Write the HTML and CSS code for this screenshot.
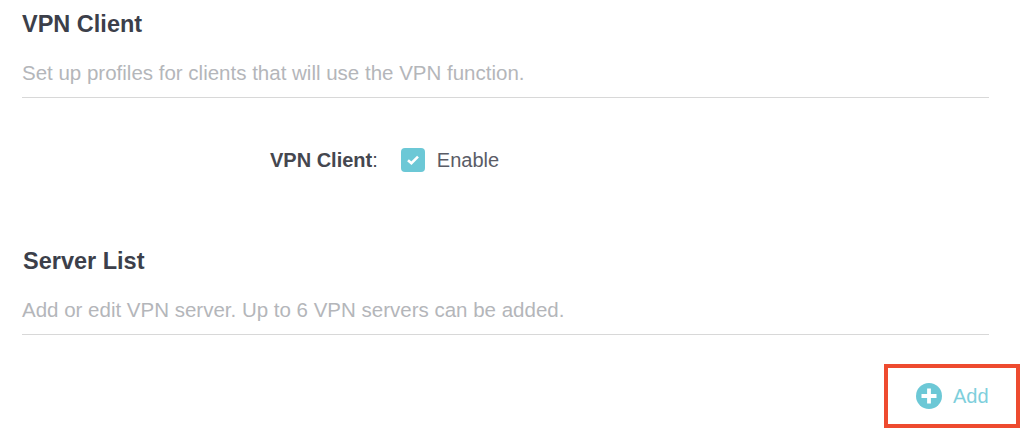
FILE: index.html
```html
<!DOCTYPE html>
<html lang="en">
<head>
    <meta charset="UTF-8">
    <title>VPN Client</title>
    <link rel="stylesheet" href="styles.css">
</head>
<body>
<div class="page">
    <div class="section">
        <h2 class="title">VPN Client</h2>
        <p class="note">Set up profiles for clients that will use the VPN function.</p>
    </div>
    <div class="field">
        <span class="label">VPN Client<span class="colon">:</span></span>
        <span class="check">
            <svg width="14" height="12" viewBox="0 0 14 12"><path d="M2 6.2 L5.4 9.2 L12 2.6" fill="none" stroke="#fff" stroke-width="2.6"/></svg>
        </span>
        <span class="check-text">Enable</span>
    </div>
    <div class="section section-list">
        <h2 class="title">Server List</h2>
        <p class="note">Add or edit VPN server. Up to 6 VPN servers can be added.</p>
    </div>
    <div class="actions">
        <a href="javascript:;" class="add">
            <svg width="26" height="26" viewBox="0 0 26 26"><circle cx="13" cy="13" r="13" fill="#6cc8d6"/><path d="M13 5.5 V20.5 M5.5 13 H20.5" stroke="#fff" stroke-width="3.8"/></svg>
            <span>Add</span>
        </a>
    </div>
</div>
</body>
</html>
```

FILE: styles.css
```css
*{
    margin: 0;
    padding: 0;
    box-sizing: border-box;
}
body{
    background-color: #fff;
    font-family: "Liberation Sans", Arial, sans-serif;
    color: #4a4a55;
    overflow: hidden;
}
.page{
    width: 1024px;
    height: 430px;
    padding: 11px 35px 0 22px;
}
.section{
    border-bottom: 1px solid #d8d8d8;
    height: 87px;
}
.title{
    font-size: 23.5px;
    line-height: 26px;
    font-weight: bold;
    color: #3c3f4a;
}
.note{
    margin-top: 24px;
    font-size: 20.5px;
    line-height: 24px;
    color: #b4b6ba;
}
.field{
    display: flex;
    align-items: center;
    height: 26px;
    margin-top: 49px;
    padding-left: 248px;
    font-size: 20px;
}
.label{
    font-weight: bold;
    color: #45474f;
}
.colon{
    font-weight: normal;
}
.check{
    display: flex;
    align-items: center;
    justify-content: center;
    width: 24px;
    height: 24px;
    margin-left: 23px;
    border-radius: 4px;
    background-color: #6cc8d6;
}
.check-text{
    margin-left: 12px;
    color: #5a5c66;
}
.section-list{
    margin-top: 75px;
}
.section-list .title{
    padding-left: 1px;
}
.actions{
    display: flex;
    justify-content: flex-end;
    margin-top: 29px;
    margin-right: -31px;
}
.add{
    display: flex;
    align-items: center;
    gap: 11px;
    width: 136px;
    height: 64px;
    padding-left: 28px;
    border: 4px solid #ee4b2f;
    font-size: 20px;
    color: #7ecfdc;
    text-decoration: none;
}
```
